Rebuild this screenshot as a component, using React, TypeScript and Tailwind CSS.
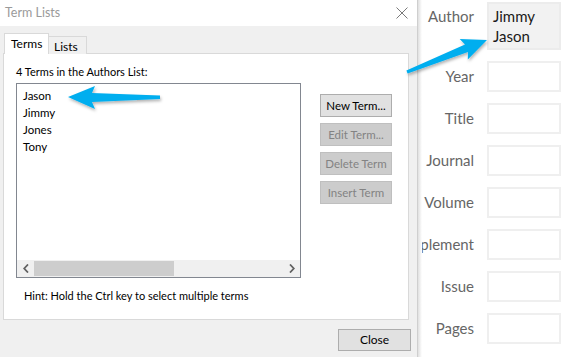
import React from "react";

const font = { fontFamily: 'Lato, "Noto Sans", sans-serif' };

function Btn({ children, disabled }: { children: React.ReactNode; disabled?: boolean }) {
  return (
    <div
      className={
        "w-[72px] h-[23px] flex items-center justify-center text-[11.5px] border " +
        (disabled
          ? "bg-[#cccccc] border-[#bfbfbf] text-[#838383]"
          : "bg-[#e1e1e1] border-[#adadad] text-black")
      }
    >
      {children}
    </div>
  );
}

function Chevron({ dir }: { dir: "l" | "r" }) {
  return (
    <svg width="6" height="9" viewBox="0 0 6 9">
      <path
        d={dir === "l" ? "M5 0.5 L1.2 4.5 L5 8.5" : "M1 0.5 L4.8 4.5 L1 8.5"}
        fill="none"
        stroke="#606060"
        strokeWidth="1.8"
      />
    </svg>
  );
}

function Field({ label, tall, children }: { label: string; tall?: boolean; children?: React.ReactNode }) {
  return (
    <div className={"flex " + (tall ? "items-start h-[48px]" : "items-center h-[31px]")}>
      <div className={"w-[65px] pr-[13px] text-right text-[15px] text-[#666666] whitespace-nowrap flex justify-end " + (tall ? "pt-[3px]" : "")}>
        <span>{label}</span>
      </div>
      <div
        className={
          "flex-1 h-full border-2 " +
          (tall ? "bg-[#f2f2f2] border-[#ececec] pl-[4px] pt-[2px] text-[15px] leading-[20px] text-[#1a1a1a]" : "bg-white border-[#efefef]")
        }
      >
        {children}
      </div>
    </div>
  );
}

export default function App() {
  return (
    <div className="relative w-[561px] h-[357px] overflow-hidden flex bg-white" style={font}>
      {/* Dialog */}
      <div className="w-[417px] h-full flex flex-col bg-[#f0f0f0] shrink-0">
        <div className="h-[26px] bg-white flex items-center justify-between pl-[5px] pr-[9px]">
          <span className="text-[12.5px] text-[#9a9a9a]">Term Lists</span>
          <svg width="12" height="12" viewBox="0 0 12 12">
            <path d="M0.5 0.5 L11.5 11.5 M11.5 0.5 L0.5 11.5" stroke="#7a7a7a" strokeWidth="1" />
          </svg>
        </div>
        <div className="flex-1 flex flex-col pl-[3px] pt-[7px]">
          <div className="flex items-end h-[21px] relative z-10 pl-px">
            <div className="w-[45px] h-[21px] bg-white border border-[#d9d9d9] border-b-0 text-[12px] text-black pl-[6px] leading-[20px]">
              Terms
            </div>
            <div className="w-[38px] h-[18px] bg-[#f0f0f0] border border-[#d9d9d9] border-l-0 border-b-0 text-[12px] text-black pl-[5px] leading-[19px]">
              Lists
            </div>
          </div>
          <div className="w-[406px] h-[267px] -mt-px bg-white border border-[#d9d9d9] pl-[12px] pt-[10px] flex flex-col">
            <div className="text-[11px] text-black leading-[16px]">4 Terms in the Authors List:</div>
            <div className="flex mt-[3px]">
              <div className="w-[285px] h-[195px] border border-[#828790] flex flex-col">
                <div className="flex-1 pl-[6px] pt-[3px] text-[11.5px] text-black">
                  <div className="h-[17px] leading-[17px]">Jason</div>
                  <div className="h-[17px] leading-[17px]">Jimmy</div>
                  <div className="h-[17px] leading-[17px]">Jones</div>
                  <div className="h-[17px] leading-[17px]">Tony</div>
                </div>
                <div className="h-[17px] bg-[#f0f0f0] flex items-center">
                  <div className="w-[17px] flex justify-center">
                    <Chevron dir="l" />
                  </div>
                  <div className="w-[140px] h-[15px] bg-[#cdcdcd]" />
                  <div className="flex-1" />
                  <div className="w-[17px] flex justify-center">
                    <Chevron dir="r" />
                  </div>
                </div>
              </div>
              <div className="ml-[19px] mt-[11px] flex flex-col gap-[6px]">
                <Btn>New Term...</Btn>
                <Btn disabled>Edit Term...</Btn>
                <Btn disabled>Delete Term</Btn>
                <Btn disabled>Insert Term</Btn>
              </div>
            </div>
            <div className="pl-[8px] mt-[10px] text-[11px] text-black leading-[16px]">
              Hint: Hold the Ctrl key to select multiple terms
            </div>
          </div>
          <div className="flex justify-end pr-[6px] mt-[9px]">
            <div className="w-[73px] h-[22px] bg-[#e1e1e1] border border-[#adadad] flex items-center justify-center text-[12px] text-black">
              Close
            </div>
          </div>
        </div>
      </div>
      {/* shadow */}
      <div className="w-px h-full bg-[#cfcfcf] shrink-0" />
      <div className="w-[4px] h-full bg-gradient-to-r from-[#e0e0e0] to-white shrink-0" />
      {/* Right panel */}
      <div className="flex-1 flex flex-col pt-[2px] gap-[11px] overflow-hidden">
        <Field label="Author" tall>
          <div>Jimmy</div>
          <div>Jason</div>
        </Field>
        <Field label="Year" />
        <Field label="Title" />
        <Field label="Journal" />
        <Field label="Volume" />
        <Field label="Supplement" />
        <Field label="Issue" />
        <Field label="Pages" />
      </div>
      {/* Arrows overlay */}
      <svg className="absolute left-0 top-0 pointer-events-none" width="561" height="357" viewBox="0 0 561 357">
        <defs>
          <filter id="sh" x="-20%" y="-50%" width="140%" height="200%">
            <feDropShadow dx="1" dy="2" stdDeviation="1.5" floodColor="#000" floodOpacity="0.3" />
          </filter>
        </defs>
        <polygon
          points="68,97 95,86 92,93 160,95.5 160,99 92,102 95,109"
          fill="#00aeef"
          filter="url(#sh)"
        />
        <polygon
          points="487,40 459.7,39.1 465,44.5 406.4,70.6 407.6,73.4 468,51.9 467.8,59.5"
          fill="#00aeef"
          filter="url(#sh)"
        />
      </svg>
    </div>
  );
}
